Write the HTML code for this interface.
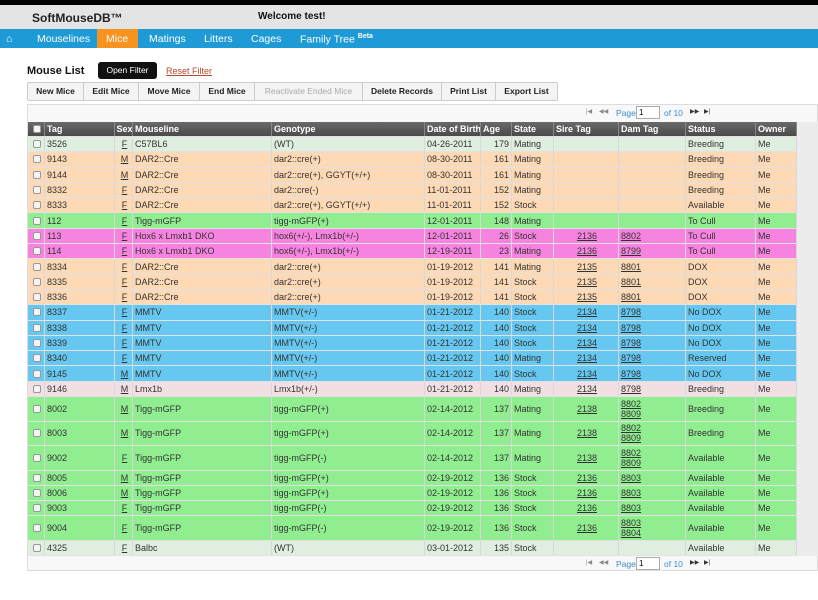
<!DOCTYPE html>
<html><head><meta charset="utf-8"><style>
*{box-sizing:border-box;margin:0;padding:0}
body{width:818px;height:600px;background:#fff;font-family:"Liberation Sans",Arial,sans-serif;font-size:9px;color:#333;position:relative;overflow:hidden}
.top{position:absolute;left:0;top:0;width:818px;height:5px;background:#000}
.hdr{position:absolute;left:0;top:5px;width:818px;height:24px;background:#e4e4e4}
.logo{position:absolute;left:32px;top:6px;font-size:12px;font-weight:bold;color:#222}
.wel{position:absolute;left:258px;top:6px;font-size:10px;font-weight:bold;color:#111}
.nav{position:absolute;left:0;top:29px;width:818px;height:19px;background:#1e9bd7;color:#fff;font-size:10.5px}
.nav span{position:absolute;top:4px}
.act{position:absolute;left:97px;top:0;width:41px;height:19px;background:#f7931e}
.title{position:absolute;left:27px;top:65px;font-size:11px;font-weight:bold;color:#111}
.of{position:absolute;left:98px;top:62px;width:59px;height:17px;background:#111;border-radius:3px;color:#fff;font-size:8.5px;text-align:center;line-height:16px}
.rf{position:absolute;left:166px;top:66px;font-size:9px;color:#b5472a;text-decoration:underline}
.btns{position:absolute;left:27px;top:82px;height:19px;display:flex;border:1px solid #ccc;border-radius:2px;background:#f4f4f4}
.btns div{height:17px;line-height:17px;font-size:8.5px;font-weight:bold;text-align:center;border-right:1px solid #ccc;color:#222}
.box{position:absolute;left:27px;top:104px;width:791px;height:467px;border:1px solid #ddd;background:#f8f8f8}
.pg{position:absolute;height:16px;font-size:8.5px;color:#3a8fd0;right:0}
.pg .a{position:absolute;top:3px;color:#888;font-size:6px}
.pg input{position:absolute;top:1px;width:24px;height:13px;border:1px solid #aaa;font-size:8px;padding-left:2px}
.tbl{position:absolute;left:0;top:17px;width:769px}
.r{display:flex;border-bottom:1px solid #e2e2e2}
.r div{border-right:1px solid #d8d8d8;padding-left:2px;white-space:nowrap;overflow:hidden;display:flex;align-items:center}
.h{background:linear-gradient(#6a6a6a,#4a4a4a);color:#fff;font-weight:bold;height:15px}
.h div{border-right:1px solid #888}
.c0{width:17px;justify-content:center}.c1{width:70px}.c2{width:18px;justify-content:center}.c3{width:139px}.c4{width:153px}.c5{width:56px}.c6{width:31px;justify-content:flex-end;padding-right:2px}.c7{width:42px}.c8{width:65px;justify-content:center}.c9{width:67px}.c10{width:70px}.c11{width:41px}
.u{text-decoration:underline}
.cb{width:8px;height:8px;border:1px solid #999;border-radius:2px;background:#f4f4f4}
.s{height:15.3px}.d{height:24.5px}
.lg{background:#dfeedf}.pe{background:#fdd9b5}.gr{background:#90ee90}.mg{background:#f683e0}.bl{background:#66c8f0}.pk{background:#f2dfe4}
.rt{position:absolute;left:769px;top:17px;width:21px;height:434px;background:#ececec}
</style></head><body>
<div class="top"></div>
<div class="hdr"><div class="logo">SoftMouseDB™</div><div class="wel">Welcome test!</div></div>
<div class="nav"><div class="act"></div>
<span style="left:6px">&#8962;</span><span style="left:37px">Mouselines</span><span style="left:106px">Mice</span><span style="left:149px">Matings</span><span style="left:204px">Litters</span><span style="left:251px">Cages</span><span style="left:300px">Family Tree <sup style="font-size:7px;font-weight:bold">Beta</sup></span></div>
<div class="title">Mouse List</div>
<div class="of">Open Filter</div>
<div class="rf">Reset Filter</div>
<div class="btns">
<div style="width:56px">New Mice</div><div style="width:55px">Edit Mice</div><div style="width:61px">Move Mice</div><div style="width:55px">End Mice</div><div style="width:108px;color:#aaa;font-weight:normal">Reactivate Ended Mice</div><div style="width:79px">Delete Records</div><div style="width:54px">Print List</div><div style="width:61px;border-right:0">Export List</div></div>
<div class="box">
<div class="pg" style="top:0;width:791px"><span class="a" style="left:560px">|◀</span><span class="a" style="left:573px">◀◀</span><span style="position:absolute;left:590px;top:3px">Page</span><input value="1" style="left:610px"><span style="position:absolute;left:638px;top:3px">of 10</span><span class="a" style="left:664px;color:#333">▶▶</span><span class="a" style="left:678px;color:#333">▶|</span></div>
<div class="tbl">
<div class="r h"><div class="c0"><span class="cb"></span></div><div class="c1">Tag</div><div class="c2">Sex</div><div class="c3">Mouseline</div><div class="c4">Genotype</div><div class="c5">Date of Birth</div><div class="c6" style="justify-content:flex-start">Age</div><div class="c7">State</div><div class="c8" style="justify-content:flex-start">Sire Tag</div><div class="c9">Dam Tag</div><div class="c10">Status</div><div class="c11">Owner</div></div>
<div class="r s lg"><div class="c0"><span class="cb"></span></div><div class="c1">3526</div><div class="c2 u">F</div><div class="c3">C57BL6</div><div class="c4">(WT)</div><div class="c5">04-26-2011</div><div class="c6">179</div><div class="c7">Mating</div><div class="c8"></div><div class="c9"></div><div class="c10">Breeding</div><div class="c11">Me</div></div>
<div class="r s pe"><div class="c0"><span class="cb"></span></div><div class="c1">9143</div><div class="c2 u">M</div><div class="c3">DAR2::Cre</div><div class="c4">dar2::cre(+)</div><div class="c5">08-30-2011</div><div class="c6">161</div><div class="c7">Mating</div><div class="c8"></div><div class="c9"></div><div class="c10">Breeding</div><div class="c11">Me</div></div>
<div class="r s pe"><div class="c0"><span class="cb"></span></div><div class="c1">9144</div><div class="c2 u">M</div><div class="c3">DAR2::Cre</div><div class="c4">dar2::cre(+), GGYT(+/+)</div><div class="c5">08-30-2011</div><div class="c6">161</div><div class="c7">Mating</div><div class="c8"></div><div class="c9"></div><div class="c10">Breeding</div><div class="c11">Me</div></div>
<div class="r s pe"><div class="c0"><span class="cb"></span></div><div class="c1">8332</div><div class="c2 u">F</div><div class="c3">DAR2::Cre</div><div class="c4">dar2::cre(-)</div><div class="c5">11-01-2011</div><div class="c6">152</div><div class="c7">Mating</div><div class="c8"></div><div class="c9"></div><div class="c10">Breeding</div><div class="c11">Me</div></div>
<div class="r s pe"><div class="c0"><span class="cb"></span></div><div class="c1">8333</div><div class="c2 u">F</div><div class="c3">DAR2::Cre</div><div class="c4">dar2::cre(+), GGYT(+/+)</div><div class="c5">11-01-2011</div><div class="c6">152</div><div class="c7">Stock</div><div class="c8"></div><div class="c9"></div><div class="c10">Available</div><div class="c11">Me</div></div>
<div class="r s gr"><div class="c0"><span class="cb"></span></div><div class="c1">112</div><div class="c2 u">F</div><div class="c3">Tigg-mGFP</div><div class="c4">tigg-mGFP(+)</div><div class="c5">12-01-2011</div><div class="c6">148</div><div class="c7">Mating</div><div class="c8"></div><div class="c9"></div><div class="c10">To Cull</div><div class="c11">Me</div></div>
<div class="r s mg"><div class="c0"><span class="cb"></span></div><div class="c1">113</div><div class="c2 u">F</div><div class="c3">Hox6 x Lmxb1 DKO</div><div class="c4">hox6(+/-), Lmx1b(+/-)</div><div class="c5">12-01-2011</div><div class="c6">26</div><div class="c7">Stock</div><div class="c8 u">2136</div><div class="c9 u">8802</div><div class="c10">To Cull</div><div class="c11">Me</div></div>
<div class="r s mg"><div class="c0"><span class="cb"></span></div><div class="c1">114</div><div class="c2 u">F</div><div class="c3">Hox6 x Lmxb1 DKO</div><div class="c4">hox6(+/-), Lmx1b(+/-)</div><div class="c5">12-19-2011</div><div class="c6">23</div><div class="c7">Mating</div><div class="c8 u">2136</div><div class="c9 u">8799</div><div class="c10">To Cull</div><div class="c11">Me</div></div>
<div class="r s pe"><div class="c0"><span class="cb"></span></div><div class="c1">8334</div><div class="c2 u">F</div><div class="c3">DAR2::Cre</div><div class="c4">dar2::cre(+)</div><div class="c5">01-19-2012</div><div class="c6">141</div><div class="c7">Mating</div><div class="c8 u">2135</div><div class="c9 u">8801</div><div class="c10">DOX</div><div class="c11">Me</div></div>
<div class="r s pe"><div class="c0"><span class="cb"></span></div><div class="c1">8335</div><div class="c2 u">F</div><div class="c3">DAR2::Cre</div><div class="c4">dar2::cre(+)</div><div class="c5">01-19-2012</div><div class="c6">141</div><div class="c7">Stock</div><div class="c8 u">2135</div><div class="c9 u">8801</div><div class="c10">DOX</div><div class="c11">Me</div></div>
<div class="r s pe"><div class="c0"><span class="cb"></span></div><div class="c1">8336</div><div class="c2 u">F</div><div class="c3">DAR2::Cre</div><div class="c4">dar2::cre(+)</div><div class="c5">01-19-2012</div><div class="c6">141</div><div class="c7">Stock</div><div class="c8 u">2135</div><div class="c9 u">8801</div><div class="c10">DOX</div><div class="c11">Me</div></div>
<div class="r s bl"><div class="c0"><span class="cb"></span></div><div class="c1">8337</div><div class="c2 u">F</div><div class="c3">MMTV</div><div class="c4">MMTV(+/-)</div><div class="c5">01-21-2012</div><div class="c6">140</div><div class="c7">Stock</div><div class="c8 u">2134</div><div class="c9 u">8798</div><div class="c10">No DOX</div><div class="c11">Me</div></div>
<div class="r s bl"><div class="c0"><span class="cb"></span></div><div class="c1">8338</div><div class="c2 u">F</div><div class="c3">MMTV</div><div class="c4">MMTV(+/-)</div><div class="c5">01-21-2012</div><div class="c6">140</div><div class="c7">Stock</div><div class="c8 u">2134</div><div class="c9 u">8798</div><div class="c10">No DOX</div><div class="c11">Me</div></div>
<div class="r s bl"><div class="c0"><span class="cb"></span></div><div class="c1">8339</div><div class="c2 u">F</div><div class="c3">MMTV</div><div class="c4">MMTV(+/-)</div><div class="c5">01-21-2012</div><div class="c6">140</div><div class="c7">Stock</div><div class="c8 u">2134</div><div class="c9 u">8798</div><div class="c10">No DOX</div><div class="c11">Me</div></div>
<div class="r s bl"><div class="c0"><span class="cb"></span></div><div class="c1">8340</div><div class="c2 u">F</div><div class="c3">MMTV</div><div class="c4">MMTV(+/-)</div><div class="c5">01-21-2012</div><div class="c6">140</div><div class="c7">Mating</div><div class="c8 u">2134</div><div class="c9 u">8798</div><div class="c10">Reserved</div><div class="c11">Me</div></div>
<div class="r s bl"><div class="c0"><span class="cb"></span></div><div class="c1">9145</div><div class="c2 u">M</div><div class="c3">MMTV</div><div class="c4">MMTV(+/-)</div><div class="c5">01-21-2012</div><div class="c6">140</div><div class="c7">Stock</div><div class="c8 u">2134</div><div class="c9 u">8798</div><div class="c10">No DOX</div><div class="c11">Me</div></div>
<div class="r s pk"><div class="c0"><span class="cb"></span></div><div class="c1">9146</div><div class="c2 u">M</div><div class="c3">Lmx1b</div><div class="c4">Lmx1b(+/-)</div><div class="c5">01-21-2012</div><div class="c6">140</div><div class="c7">Mating</div><div class="c8 u">2134</div><div class="c9 u">8798</div><div class="c10">Breeding</div><div class="c11">Me</div></div>
<div class="r d gr"><div class="c0"><span class="cb"></span></div><div class="c1">8002</div><div class="c2 u">M</div><div class="c3">Tigg-mGFP</div><div class="c4">tigg-mGFP(+)</div><div class="c5">02-14-2012</div><div class="c6">137</div><div class="c7">Mating</div><div class="c8 u">2138</div><div class="c9 u" style="flex-direction:column;align-items:flex-start;justify-content:center;line-height:10px">8802<br>8809</div><div class="c10">Breeding</div><div class="c11">Me</div></div>
<div class="r d gr"><div class="c0"><span class="cb"></span></div><div class="c1">8003</div><div class="c2 u">M</div><div class="c3">Tigg-mGFP</div><div class="c4">tigg-mGFP(+)</div><div class="c5">02-14-2012</div><div class="c6">137</div><div class="c7">Mating</div><div class="c8 u">2138</div><div class="c9 u" style="flex-direction:column;align-items:flex-start;justify-content:center;line-height:10px">8802<br>8809</div><div class="c10">Breeding</div><div class="c11">Me</div></div>
<div class="r d gr"><div class="c0"><span class="cb"></span></div><div class="c1">9002</div><div class="c2 u">F</div><div class="c3">Tigg-mGFP</div><div class="c4">tigg-mGFP(-)</div><div class="c5">02-14-2012</div><div class="c6">137</div><div class="c7">Mating</div><div class="c8 u">2138</div><div class="c9 u" style="flex-direction:column;align-items:flex-start;justify-content:center;line-height:10px">8802<br>8809</div><div class="c10">Available</div><div class="c11">Me</div></div>
<div class="r s gr"><div class="c0"><span class="cb"></span></div><div class="c1">8005</div><div class="c2 u">M</div><div class="c3">Tigg-mGFP</div><div class="c4">tigg-mGFP(+)</div><div class="c5">02-19-2012</div><div class="c6">136</div><div class="c7">Stock</div><div class="c8 u">2136</div><div class="c9 u">8803</div><div class="c10">Available</div><div class="c11">Me</div></div>
<div class="r s gr"><div class="c0"><span class="cb"></span></div><div class="c1">8006</div><div class="c2 u">M</div><div class="c3">Tigg-mGFP</div><div class="c4">tigg-mGFP(+)</div><div class="c5">02-19-2012</div><div class="c6">136</div><div class="c7">Stock</div><div class="c8 u">2136</div><div class="c9 u">8803</div><div class="c10">Available</div><div class="c11">Me</div></div>
<div class="r s gr"><div class="c0"><span class="cb"></span></div><div class="c1">9003</div><div class="c2 u">F</div><div class="c3">Tigg-mGFP</div><div class="c4">tigg-mGFP(-)</div><div class="c5">02-19-2012</div><div class="c6">136</div><div class="c7">Stock</div><div class="c8 u">2136</div><div class="c9 u">8803</div><div class="c10">Available</div><div class="c11">Me</div></div>
<div class="r d gr"><div class="c0"><span class="cb"></span></div><div class="c1">9004</div><div class="c2 u">F</div><div class="c3">Tigg-mGFP</div><div class="c4">tigg-mGFP(-)</div><div class="c5">02-19-2012</div><div class="c6">136</div><div class="c7">Stock</div><div class="c8 u">2136</div><div class="c9 u" style="flex-direction:column;align-items:flex-start;justify-content:center;line-height:10px">8803<br>8804</div><div class="c10">Available</div><div class="c11">Me</div></div>
<div class="r s lg"><div class="c0"><span class="cb"></span></div><div class="c1">4325</div><div class="c2 u">F</div><div class="c3">Balbc</div><div class="c4">(WT)</div><div class="c5">03-01-2012</div><div class="c6">135</div><div class="c7">Stock</div><div class="c8"></div><div class="c9"></div><div class="c10">Available</div><div class="c11">Me</div></div>
</div>
<div class="rt"></div>
<div class="pg" style="top:451px;width:791px"><span class="a" style="left:560px">|◀</span><span class="a" style="left:573px">◀◀</span><span style="position:absolute;left:590px;top:3px">Page</span><input value="1" style="left:610px"><span style="position:absolute;left:638px;top:3px">of 10</span><span class="a" style="left:664px;color:#333">▶▶</span><span class="a" style="left:678px;color:#333">▶|</span></div>
</div>
</body></html>
